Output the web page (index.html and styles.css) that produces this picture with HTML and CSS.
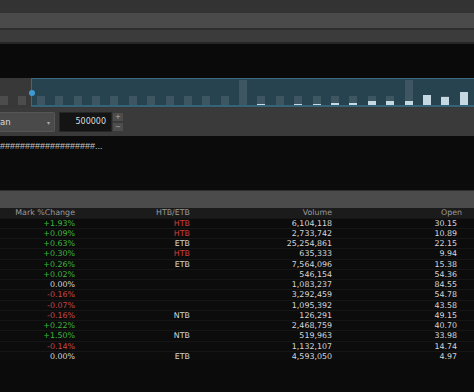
FILE: index.html
```html
<!DOCTYPE html>
<html>
<head>
<meta charset="utf-8">
<link rel="stylesheet" href="styles.css">
</head>
<body>
<div class="bar-a"></div>
<div class="bar-b"></div>
<div class="bar-c"></div>
<div class="bar-d"></div>
<div class="bar-e"></div>
<div class="blank"></div>
<div class="chart">
  <div class="selection"></div>
  <div class="dot"></div>
  <div class="slots">
    <div class="slot"></div><div class="slot"></div><div class="slot"></div><div class="slot"></div>
    <div class="slot"></div><div class="slot"></div><div class="slot"></div><div class="slot"></div>
    <div class="slot"></div><div class="slot"></div><div class="slot"></div><div class="slot"></div>
    <div class="slot"></div>
    <div class="slot tall"></div>
    <div class="slot"><div class="fill" style="height:1.5px"></div></div>
    <div class="slot"></div>
    <div class="slot"><div class="fill" style="height:1px"></div></div>
    <div class="slot"><div class="fill" style="height:1px"></div></div>
    <div class="slot"><div class="fill" style="height:2.5px"></div></div>
    <div class="slot"><div class="fill" style="height:2px"></div></div>
    <div class="slot"><div class="fill" style="height:4px"></div></div>
    <div class="slot"><div class="fill" style="height:4.5px"></div></div>
    <div class="slot tall"><div class="fill" style="height:4px"></div></div>
    <div class="slot"><div class="fill" style="height:10px"></div></div>
    <div class="slot"><div class="fill" style="height:8px"></div></div>
    <div class="slot"><div class="fill" style="height:13px"></div></div>
  </div>
</div>
<div class="controls">
  <div class="select"><span>an</span><span class="caret">▾</span></div>
  <div class="qty">500000</div>
  <div class="stepper"><div class="step">+</div><div class="step">−</div></div>
</div>
<div class="log"><div class="hash">###################...</div></div>
<div class="divider"></div>
<div class="table">
  <div class="row head"><div>Mark %Change</div><div>HTB/ETB</div><div>Volume</div><div class="open-h">Open</div></div>
  <div class="row"><div class="up">+1.93%</div><div class="htb">HTB</div><div>6,104,118</div><div>30.15</div></div>
  <div class="row"><div class="up">+0.09%</div><div class="htb">HTB</div><div>2,733,742</div><div>10.89</div></div>
  <div class="row"><div class="up">+0.63%</div><div>ETB</div><div>25,254,861</div><div>22.15</div></div>
  <div class="row"><div class="up">+0.30%</div><div class="htb">HTB</div><div>635,333</div><div>9.94</div></div>
  <div class="row"><div class="up">+0.26%</div><div>ETB</div><div>7,564,096</div><div>15.38</div></div>
  <div class="row"><div class="up">+0.02%</div><div></div><div>546,154</div><div>54.36</div></div>
  <div class="row"><div>0.00%</div><div></div><div>1,083,237</div><div>84.55</div></div>
  <div class="row"><div class="down">-0.16%</div><div></div><div>3,292,459</div><div>54.78</div></div>
  <div class="row"><div class="down">-0.07%</div><div></div><div>1,095,392</div><div>43.58</div></div>
  <div class="row"><div class="down">-0.16%</div><div>NTB</div><div>126,291</div><div>49.15</div></div>
  <div class="row"><div class="up">+0.22%</div><div></div><div>2,468,759</div><div>40.70</div></div>
  <div class="row"><div class="up">+1.50%</div><div>NTB</div><div>519,963</div><div>33.98</div></div>
  <div class="row"><div class="down">-0.14%</div><div></div><div>1,132,107</div><div>14.74</div></div>
  <div class="row"><div>0.00%</div><div>ETB</div><div>4,593,050</div><div>4.97</div></div>
</div>
</body>
</html>
```
FILE: styles.css
```css
html, body {
  margin: 0;
  padding: 0;
}
body {
  width: 474px;
  height: 392px;
  overflow: hidden;
  background: #0b0b0b;
  font-family: "DejaVu Sans", "Liberation Sans", sans-serif;
  color: #d8d8d8;
}
.bar-a { height: 13px; background: #333333; }
.bar-b { height: 15px; background: #4a4a4a; }
.bar-c { height: 2px; background: #2d2d2d; }
.bar-d { height: 12px; background: #3b3b3b; }
.bar-e { height: 2px; background: #262626; }
.blank { height: 34px; background: #0a0a0a; }

.chart {
  position: relative;
  height: 30px;
  background: #383838;
  box-sizing: border-box;
  padding-top: 2px;
}
.selection {
  position: absolute;
  left: 31px;
  top: 0;
  right: 0;
  height: 29px;
  box-sizing: border-box;
  background: #274350;
  border-top: 1px solid #3a6a82;
  border-left: 1px solid #3a6a82;
  border-bottom: 2px solid #356379;
}
.dot {
  position: absolute;
  left: 29px;
  top: 12px;
  width: 6px;
  height: 6px;
  border-radius: 50%;
  background: #3d9ad2;
  z-index: 2;
}
.slots {
  position: relative;
  z-index: 1;
  width: 468px;
  height: 25px;
  display: flex;
  justify-content: space-between;
  align-items: flex-end;
}
.slot {
  width: 8px;
  height: 25px;
  display: flex;
  flex-direction: column;
  justify-content: flex-end;
  background: linear-gradient(to top, rgba(255,255,255,0.1) 9px, transparent 9px);
}
.slot.tall {
  background: rgba(255,255,255,0.1);
}
.fill {
  background: #c6d9e3;
}

.controls {
  height: 28px;
  background: #3a3a3a;
  display: flex;
  align-items: center;
}
.select {
  width: 55px;
  height: 20px;
  box-sizing: border-box;
  background: #4a4a4a;
  border: 1px solid #565656;
  border-left: none;
  border-radius: 0 2px 2px 0;
  display: flex;
  align-items: center;
  justify-content: space-between;
  padding-right: 4px;
  font-size: 8.5px;
  color: #dcdcdc;
}
.caret {
  font-size: 6px;
  color: #aaaaaa;
}
.qty {
  margin-left: 4px;
  width: 53px;
  height: 20px;
  box-sizing: border-box;
  background: #141414;
  border: 1px solid #262626;
  font-size: 8px;
  line-height: 18px;
  text-align: right;
  padding-right: 5px;
  color: #dcdcdc;
}
.stepper {
  display: flex;
  flex-direction: column;
  gap: 0;
}
.step {
  width: 12px;
  height: 10px;
  box-sizing: border-box;
  background: #4d4d4d;
  border: 1px solid #3a3a3a;
  color: #b0b0b0;
  font-size: 7px;
  line-height: 8px;
  text-align: center;
}

.log {
  height: 54px;
  background: #0b0b0b;
  box-sizing: border-box;
  padding-top: 4px;
}
.hash {
  font-family: "Liberation Sans", sans-serif;
  font-size: 9px;
  line-height: 12px;
  color: #c8c8c8;
}
.divider {
  height: 18px;
  background: #4b4b4b;
  border-top: 1px solid #2e2e2e;
  box-sizing: border-box;
}

.table {
  font-size: 7.9px;
}
.row {
  display: grid;
  grid-template-columns: 75px 115px 142px 125px;
  height: 10.25px;
  line-height: 10.25px;
  box-sizing: border-box;
  border-top: 1px solid #161616;
  background: #0c0c0c;
  text-align: right;
  white-space: nowrap;
}
.row > div {
  line-height: 9.25px;
}
.row.head {
  height: 9.5px;
  background: #1b1b1b;
  border-top: none;
  color: #9a9a9a;
}
.row.head > div {
  line-height: 9.5px;
}
.open-h {
  margin-right: -5px;
}
.up { color: #3cb83c; }
.down { color: #c94848; }
.htb { color: #d63b3b; }
```
